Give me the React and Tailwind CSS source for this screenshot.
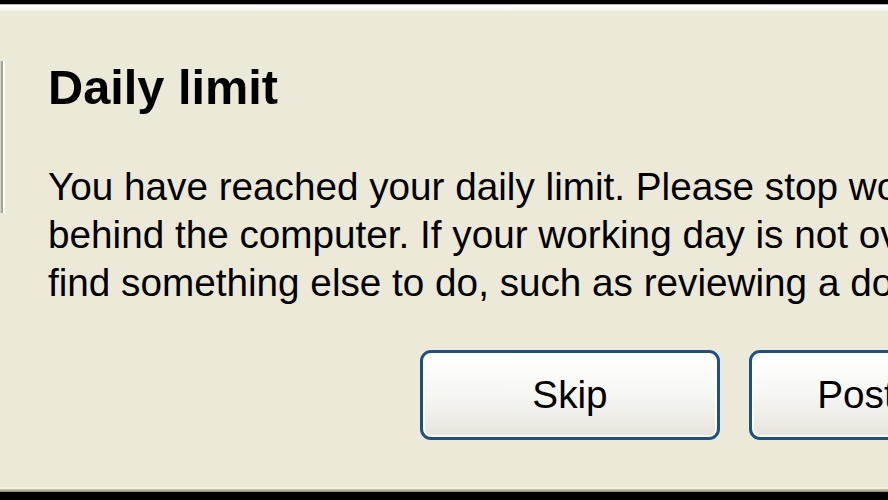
const FONT = { fontFamily: '"Liberation Sans", Arial, sans-serif' };

const XpButton = ({ label }) => (
    <button className="w-[300px] h-[90px] shrink-0 rounded-[11px] border-[3px] border-[#1c5180] bg-gradient-to-b from-white via-[#f6f6f3] to-[#e6e4dc] text-[38.7px] leading-none text-black shadow-[inset_0_0_0_2px_rgba(255,255,255,0.8)]">
        {label}
    </button>
);

export default function App() {
    return (
        <div className="w-[888px] h-[500px] flex flex-col overflow-hidden bg-[#ece9d8]" style={FONT}>
            {/* top frame edge */}
            <div className="h-[4px] shrink-0 bg-black" />
            <div className="h-[1px] shrink-0 bg-[#b8b4c8]" />
            <div className="h-[6px] shrink-0 bg-gradient-to-b from-white to-[#f4f2e8]" />

            <div className="flex-1 flex min-h-0">
                {/* left groove */}
                <div className="mt-[50px] h-[152px] w-[5px] shrink-0 flex">
                    <div className="w-[1px] bg-[#d9d5c4]" />
                    <div className="w-[2px] bg-[#a7a597]" />
                    <div className="w-[2px] bg-white" />
                </div>

                <div className="flex-1 flex flex-col pl-[43px] min-w-0 overflow-hidden">
                    <h1 className="mt-[52px] text-[48.7px] leading-[48px] font-bold text-black whitespace-nowrap">
                        Daily limit
                    </h1>
                    <div className="mt-[52px] text-[38.7px] leading-[48px] text-black whitespace-nowrap">
                        <p>You have reached your daily limit. Please stop working</p>
                        <p>behind the computer. If your working day is not over,</p>
                        <p>find something else to do, such as reviewing a document.</p>
                    </div>
                    <div className="mt-[43px] flex gap-[29px] pl-[372px]">
                        <XpButton label="Skip" />
                        <XpButton label="Postpone" />
                    </div>
                </div>
            </div>

            {/* bottom frame edge */}
            <div className="h-[2px] shrink-0 bg-[#f3f1e6]" />
            <div className="h-[3px] shrink-0 bg-gradient-to-b from-[#d6cfae] to-[#8c866c]" />
            <div className="h-[8px] shrink-0 bg-black" />
        </div>
    );
}
